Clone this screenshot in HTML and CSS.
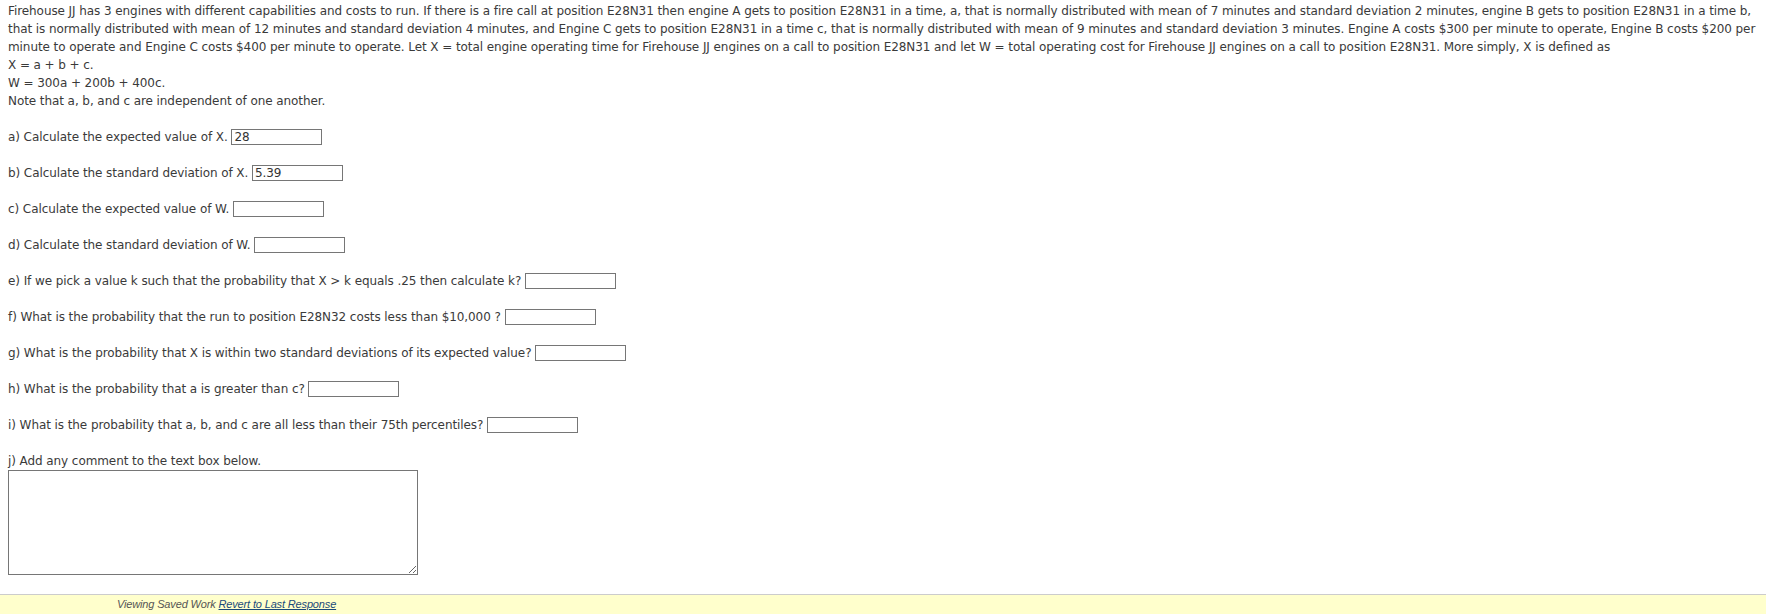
FILE: index.html
```html
<!DOCTYPE html>
<html lang="en">
<head>
<meta charset="utf-8">
<title>Firehouse JJ</title>
<link rel="stylesheet" href="styles.css">
</head>
<body>
<div class="content">
  <div class="intro">
    Firehouse JJ has 3 engines with different capabilities and costs to run. If there is a fire call at position E28N31 then engine A gets to position E28N31 in a time, a, that is normally distributed with mean of 7 minutes and standard deviation 2 minutes, engine B gets to position E28N31 in a time b, that is normally distributed with mean of 12 minutes and standard deviation 4 minutes, and Engine C gets to position E28N31 in a time c, that is normally distributed with mean of 9 minutes and standard deviation 3 minutes. Engine A costs $300 per minute to operate, Engine B costs $200 per minute to operate and Engine C costs $400 per minute to operate. Let X = total engine operating time for Firehouse JJ engines on a call to position E28N31 and let W = total operating cost for Firehouse JJ engines on a call to position E28N31. More simply, X is defined as<br>
    X = a + b + c.<br>
    W = 300a + 200b + 400c.<br>
    Note that a, b, and c are independent of one another.
  </div>
  <p class="q">a) Calculate the expected value of X. <input class="ans" type="text" value="28"></p>
  <p class="q">b) Calculate the standard deviation of X. <input class="ans" type="text" value="5.39"></p>
  <p class="q">c) Calculate the expected value of W. <input class="ans" type="text"></p>
  <p class="q">d) Calculate the standard deviation of W. <input class="ans" type="text"></p>
  <p class="q">e) If we pick a value k such that the probability that X &gt; k equals .25 then calculate k? <input class="ans" type="text"></p>
  <p class="q">f) What is the probability that the run to position E28N32 costs less than $10,000 ? <input class="ans" type="text"></p>
  <p class="q">g) What is the probability that X is within two standard deviations of its expected value? <input class="ans" type="text"></p>
  <p class="q">h) What is the probability that a is greater than c? <input class="ans" type="text"></p>
  <p class="q">i) What is the probability that a, b, and c are all less than their 75th percentiles? <input class="ans" type="text"></p>
  <p class="q">j) Add any comment to the text box below.</p>
  <textarea class="comment"></textarea>
</div>
<div class="footer">
  <span class="saved">Viewing Saved Work</span> <a class="revert" href="#">Revert to Last Response</a>
</div>
</body>
</html>
```

FILE: styles.css
```css
html, body {
  margin: 0;
  padding: 0;
  background: #ffffff;
}

body {
  font-family: "DejaVu Sans", Verdana, sans-serif;
  font-size: 12px;
  color: #3a3a3a;
  letter-spacing: -0.08px;
}

.content {
  padding: 2px 4px 0 8px;
}

.intro {
  line-height: 18px;
}

.q {
  margin: 18px 0 0;
  height: 18px;
  line-height: 18px;
  white-space: nowrap;
}

.q + .q {
  margin-top: 18px;
}

.ans {
  width: 91px;
  height: 16px;
  box-sizing: border-box;
  margin: 0;
  padding: 0 2px;
  border: 1px solid #767676;
  font-family: "DejaVu Sans", Verdana, sans-serif;
  font-size: 12px;
  letter-spacing: -0.08px;
  color: #333333;
  vertical-align: baseline;
}

.comment {
  display: block;
  width: 410px;
  height: 105px;
  box-sizing: border-box;
  margin: 0;
  padding: 2px;
  border: 1px solid #767676;
  font-family: "DejaVu Sans", Verdana, sans-serif;
  font-size: 12px;
}

.footer {
  margin-top: 19px;
  height: 19px;
  border-top: 1px solid #cccccc;
  background: #ffffcc;
  padding-left: 117px;
  font-family: "Liberation Sans", Arial, sans-serif;
  font-size: 11px;
  line-height: 19px;
  font-style: italic;
  letter-spacing: -0.15px;
  color: #555555;
}

.revert {
  color: #1a4a7a;
  text-decoration: underline;
}
```
